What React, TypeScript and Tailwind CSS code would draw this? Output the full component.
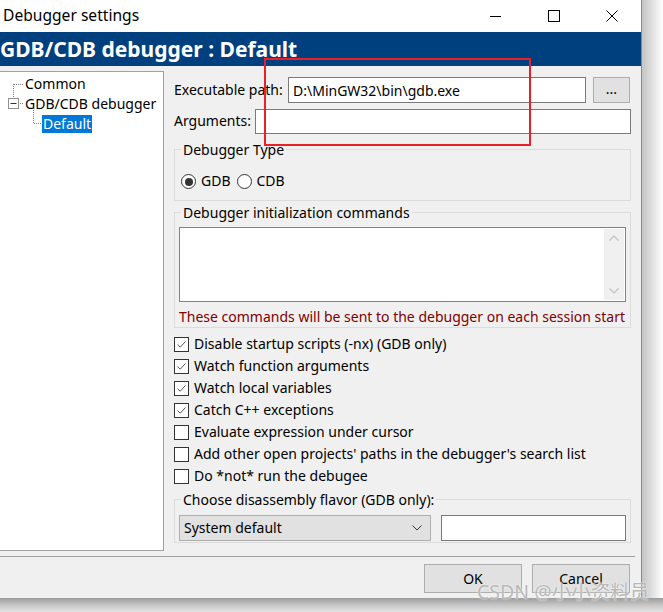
import type { ReactNode } from "react";

const ui = "font-['Noto_Sans','Noto_Sans_CJK_SC',sans-serif]";

function CheckBox({ checked, label }: { checked?: boolean; label: string }) {
  return (
    <div className="flex h-[22px] items-center">
      <span className="flex h-[15px] w-[15px] items-center justify-center border border-[#333] bg-white">
        {checked && (
          <svg width="11" height="11" viewBox="0 0 11 11">
            <path d="M1.5 5.5 L4.2 8.2 L9.5 2.5" fill="none" stroke="#555" strokeWidth="1" />
          </svg>
        )}
      </span>
      <span className="ml-[5px] -translate-y-[1px]">{label}</span>
    </div>
  );
}

function Radio({ checked, label }: { checked?: boolean; label: string }) {
  return (
    <span className="flex items-center">
      <span className="flex h-[15px] w-[15px] items-center justify-center rounded-full border border-[#333] bg-white">
        {checked && <span className="h-[8px] w-[8px] rounded-full bg-[#333]" />}
      </span>
      <span className="ml-[5px] -translate-y-[1px]">{label}</span>
    </span>
  );
}

function Group({ title, className, children }: { title: string; className?: string; children: ReactNode }) {
  return (
    <fieldset className={`border border-[#dcdcdc] ${className ?? ""}`}>
      <legend className="ml-[6px] px-[2px] leading-[15px]">{title}</legend>
      {children}
    </fieldset>
  );
}

export default function App() {
  return (
    <div className={`relative h-[612px] w-[663px] overflow-hidden bg-white text-[14px] text-black ${ui}`}>
      <div className="flex h-[598px]">
        {/* dialog window */}
        <div className="flex w-[642px] flex-col border-r border-[#8a8a8a] bg-[#f0f0f0]">
          {/* title bar */}
          <div className="flex h-[32px] items-center bg-white">
            <span className="ml-[3px] text-[15.6px]">Debugger settings</span>
            <div className="ml-auto flex h-full items-center">
              <span className="flex w-[58px] justify-center">
                <svg width="12" height="12" viewBox="0 0 12 12">
                  <path d="M0 6.5 H11" stroke="#000" strokeWidth="1" />
                </svg>
              </span>
              <span className="flex w-[58px] justify-center">
                <svg width="12" height="12" viewBox="0 0 12 12">
                  <rect x="0.5" y="0.5" width="11" height="11" fill="none" stroke="#000" />
                </svg>
              </span>
              <span className="flex w-[58px] justify-center">
                <svg width="12" height="12" viewBox="0 0 12 12">
                  <path d="M0.5 0.5 L11.5 11.5 M11.5 0.5 L0.5 11.5" stroke="#000" strokeWidth="1" />
                </svg>
              </span>
            </div>
          </div>

          {/* blue header */}
          <div className="flex h-[34px] items-center bg-[#01407f]">
            <span className="text-[21px] font-bold leading-none text-white">GDB/CDB debugger : Default</span>
          </div>

          {/* body */}
          <div className="flex">
            {/* tree */}
            <div className="relative mt-[5px] h-[480px] w-[164px] border-y border-r border-[#a0a0a0] bg-white pt-[2px]">
              <svg className="absolute left-0 top-0" width="50" height="60" viewBox="0 0 50 60">
                <g stroke="#808080" strokeDasharray="1 1" fill="none">
                  <path d="M13.5 12 V26" />
                  <path d="M14 12.5 H24" />
                  <path d="M18 31.5 H24" />
                  <path d="M33.5 38 V51" />
                  <path d="M34 51.5 H41" />
                </g>
                <rect x="8.5" y="26.5" width="10" height="10" fill="#fff" stroke="#919191" />
                <path d="M10.5 31.5 H16.5" stroke="#333" />
              </svg>
              <div className="flex h-[20px] -translate-y-[1px] items-center pl-[25px]">Common</div>
              <div className="flex h-[20px] -translate-y-[1px] items-center pl-[25px]">GDB/CDB debugger</div>
              <div className="flex h-[19px] items-center pl-[42px]">
                <span className="bg-[#0078d7] px-[1px] leading-[18px] text-white">Default</span>
              </div>
            </div>

            {/* right panel */}
            <div className="ml-[10px] w-[459px]">
              <div className="mt-[11px] flex h-[26px] items-center">
                <span className="w-[114px] -translate-y-[1px]">Executable path:</span>
                <div className="flex h-full w-[298px] items-center border border-[#7a7a7a] bg-white pl-[4px]">
                  D:\MinGW32\bin\gdb.exe
                </div>
                <div className="ml-[7px] flex h-[26px] w-[37px] items-center justify-center border border-[#adadad] bg-[#e1e1e1] pb-[4px]">
                  ...
                </div>
              </div>
              <div className="mt-[6px] flex h-[25px] items-center">
                <span className="w-[81px] -translate-y-[1px]">Arguments:</span>
                <div className="h-full w-[376px] border border-[#7a7a7a] bg-white" />
              </div>

              <Group title="Debugger Type" className="mt-[8px] h-[59px] w-[457px]">
                <div className="mt-[14px] flex items-center gap-[6px] pl-[6px]">
                  <Radio checked label="GDB" />
                  <Radio label="CDB" />
                </div>
              </Group>

              <Group title="Debugger initialization commands" className="mt-[4px] h-[123px] w-[457px]">
                <div className="ml-[4px] mt-[7px] flex h-[75px] w-[447px] border border-[#828282] bg-white">
                  <div className="ml-auto mr-[1px] mt-[1px] flex h-[71px] w-[20px] flex-col items-center justify-between bg-[#f0f0f0] py-[6px]">
                    <svg width="10" height="6" viewBox="0 0 10 6">
                      <path d="M0.5 5.5 L5 1 L9.5 5.5" fill="none" stroke="#c2c2c2" strokeWidth="1.2" />
                    </svg>
                    <svg width="10" height="6" viewBox="0 0 10 6">
                      <path d="M0.5 0.5 L5 5 L9.5 0.5" fill="none" stroke="#c2c2c2" strokeWidth="1.2" />
                    </svg>
                  </div>
                </div>
                <div className="ml-[4px] mt-[7px] leading-[16px] text-[#800000]">
                  These commands will be sent to the debugger on each session start
                </div>
              </Group>

              <div className="mt-[5px]">
                <CheckBox checked label="Disable startup scripts (-nx) (GDB only)" />
                <CheckBox checked label="Watch function arguments" />
                <CheckBox checked label="Watch local variables" />
                <CheckBox checked label="Catch C++ exceptions" />
                <CheckBox label="Evaluate expression under cursor" />
                <CheckBox label="Add other open projects' paths in the debugger's search list" />
                <CheckBox label="Do *not* run the debugee" />
              </div>

              <Group title="Choose disassembly flavor (GDB only):" className="mt-[5px] h-[51px] w-[457px]">
                <div className="ml-[4px] mt-[8px] flex items-center">
                  <div className="flex h-[26px] w-[252px] items-center border border-[#adadad] bg-[#e1e1e1] pl-[4px]">
                    <span className="-translate-y-[1px]">System default</span>
                    <svg className="ml-auto mr-[8px]" width="10" height="6" viewBox="0 0 10 6">
                      <path d="M0.5 0.5 L5 5 L9.5 0.5" fill="none" stroke="#333" strokeWidth="1" />
                    </svg>
                  </div>
                  <div className="ml-[10px] h-[26px] w-[185px] border border-[#7a7a7a] bg-white" />
                </div>
              </Group>
            </div>
          </div>

          {/* separator */}
          <div className="mt-[5px] h-[1px] w-[635px] bg-[#a0a0a0]" />

          {/* buttons */}
          <div className="mt-[7px] flex justify-end pr-[11px]">
            <div className="flex h-[29px] w-[98px] items-center justify-center border border-[#adadad] bg-[#e1e1e1]">OK</div>
            <div className="ml-[10px] flex h-[29px] w-[98px] items-center justify-center border border-[#adadad] bg-[#e1e1e1]">Cancel</div>
          </div>
        </div>
        {/* window shadow */}
        <div className="w-[21px] bg-gradient-to-r from-[#c4c4c4] to-white" />
      </div>
      <div className="h-[14px] bg-gradient-to-b from-[#9c9c9c] via-[#c6c6c6] to-[#e4e4e4]" />

      {/* red annotation frame */}
      <div className="absolute left-[264px] top-[58px] h-[88px] w-[267px] border-2 border-[#e8202a]" />

      {/* watermark */}
      <div className="absolute left-[477px] top-[580px] text-[19.5px] leading-[24px] text-[#b8b8b8] [text-shadow:0_0_2px_#fff] font-['Noto_Sans','Noto_Sans_CJK_SC',sans-serif]">
        CSDN @小小资料员
      </div>
    </div>
  );
}
